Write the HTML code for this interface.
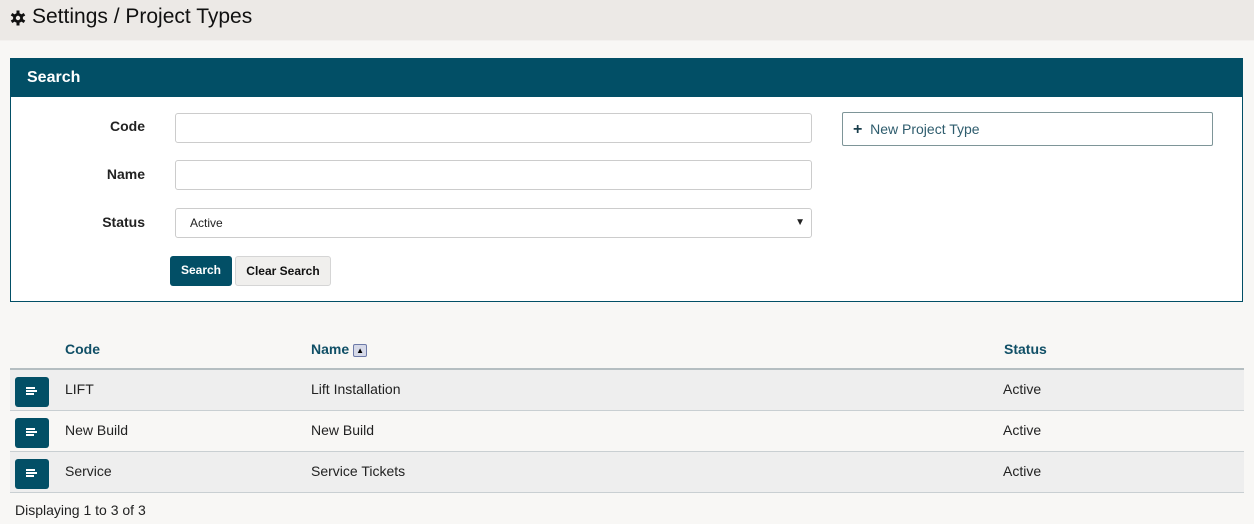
<!DOCTYPE html>
<html><head><style>
*{box-sizing:border-box;margin:0;padding:0}
body{width:1254px;height:524px;background:#f8f7f5;font-family:"Liberation Sans",Arial,sans-serif;position:relative;overflow:hidden;color:#222}
.a{position:absolute}
.top{left:0;top:0;width:1254px;height:41px;background:#ece9e6;border-bottom:1px solid #f3f1ef}
.title{left:10px;top:5px;font-size:21px;color:#111}
.panel{left:10px;top:58px;width:1233px;height:244px;border:1px solid #024f66;background:#fff}
.ph{left:0;top:0;width:1231px;height:38px;background:#024f66;color:#fff;font-weight:bold;font-size:16px;padding:10px 16px}
.lbl{font-weight:bold;font-size:14px;text-align:right;width:134px;left:0}
.inp{left:164px;width:637px;height:30px;border:1px solid #ccc;border-radius:3px;background:#fff}
.btn{border-radius:3px;font-weight:bold;font-size:12px;text-align:center;line-height:28px;height:30px}
.th{font-weight:bold;font-size:14px;color:#104f66;top:341px}
.row{left:10px;width:1234px;height:41px;border-bottom:1px solid #c9cfd2}
.row .ib{position:absolute;left:5px;top:7px;width:34px;height:30px;background:#024f66;border-radius:3px}
.row span{position:absolute;top:11px;font-size:14px}
</style></head><body>
<div class="a top"></div>
<div class="a" style="left:10px;top:10px"><svg width="16" height="16" viewBox="0 0 16 16"><g fill="#111"><circle cx="8" cy="8" r="5"/><rect x="6.5" y="0.5" width="3" height="15"/><rect x="6.5" y="0.5" width="3" height="15" transform="rotate(60 8 8)"/><rect x="6.5" y="0.5" width="3" height="15" transform="rotate(120 8 8)"/></g><circle cx="8" cy="8" r="2.2" fill="#ece9e6"/></svg></div>
<div class="a title" style="left:32px">Settings / Project Types</div>
<div class="a panel">
 <div class="a ph">Search</div>
 <div class="a lbl" style="top:59px">Code</div>
 <div class="a inp" style="top:54px"></div>
 <div class="a lbl" style="top:107px">Name</div>
 <div class="a inp" style="top:101px"></div>
 <div class="a lbl" style="top:155px">Status</div>
 <div class="a inp" style="top:149px;font-size:12px;padding:7px 14px">Active<span style="position:absolute;right:6px;top:8px;font-size:10px">▼</span></div>
 <div class="a btn" style="left:159px;top:197px;width:62px;background:#024f66;color:#fff">Search</div>
 <div class="a btn" style="left:224px;top:197px;width:96px;background:#f0efed;border:1px solid #d5d5d5;color:#111">Clear Search</div>
 <div class="a" style="left:831px;top:53px;width:371px;height:34px;border:1px solid #7e9598;border-radius:2px;font-size:14px;color:#2e5c6d;padding:8px 10px"><b style="color:#1a3e4c;font-size:16px">+</b>&nbsp; New Project Type</div>
</div>
<div class="a th" style="left:65px">Code</div>
<div class="a th" style="left:311px">Name <span style="display:inline-block;width:14px;height:13px;border:1px solid #6d7aa8;background:#d6d9e8;border-radius:2px;font-size:8px;text-align:center;vertical-align:middle;color:#000;line-height:12px">▲</span></div>
<div class="a th" style="left:1004px">Status</div>
<div class="a" style="left:10px;top:368px;width:1234px;height:2px;background:#b5bec1"></div>
<div class="a row" style="top:370px;background:#eeeeee"><div class="ib"></div><span style="left:55px">LIFT</span><span style="left:301px">Lift Installation</span><span style="left:993px">Active</span></div>
<div class="a row" style="top:411px;background:#f8f7f5"><div class="ib"></div><span style="left:55px">New Build</span><span style="left:301px">New Build</span><span style="left:993px">Active</span></div>
<div class="a row" style="top:452px;background:#eeeeee"><div class="ib"></div><span style="left:55px">Service</span><span style="left:301px">Service Tickets</span><span style="left:993px">Active</span></div>
<div class="a" style="left:15px;top:502px;font-size:14px">Displaying 1 to 3 of 3</div>
<svg class="a" style="left:26px;top:387px" width="12" height="100"><g fill="#fff"><rect x="0" y="0" width="9" height="2"/><rect x="0" y="3" width="11" height="2"/><rect x="0" y="6" width="8" height="2"/><rect x="0" y="41" width="9" height="2"/><rect x="0" y="44" width="11" height="2"/><rect x="0" y="47" width="8" height="2"/><rect x="0" y="82" width="9" height="2"/><rect x="0" y="85" width="11" height="2"/><rect x="0" y="88" width="8" height="2"/></g></svg>
</body></html>
